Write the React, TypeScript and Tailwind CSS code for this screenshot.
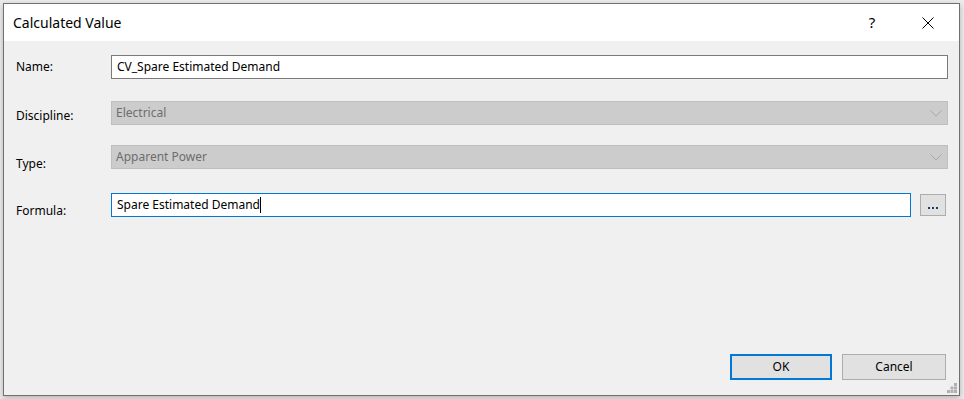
import React from 'react';

const font = { fontFamily: '"Noto Sans", "Open Sans", sans-serif' };

const Chevron: React.FC = () => (
  <svg width="12" height="7" viewBox="0 0 12 7" className="shrink-0">
    <path d="M0.5 0.5 L6 6 L11.5 0.5" fill="none" stroke="#a8a8a8" strokeWidth="1" />
  </svg>
);

const Label: React.FC<{ text: string; offset: string }> = ({ text, offset }) => (
  <div className={`w-[107px] shrink-0 pl-3 text-[12px] text-black ${offset}`}>{text}</div>
);

export default function App() {
  return (
    <div className="w-[964px] h-[399px] bg-[#ececec] pl-[3px] pt-[3px]" style={font}>
      <div className="w-[957px] h-[393px] border border-[#707070] bg-[#f0f0f0] flex flex-col shadow-[0_2px_6px_rgba(0,0,0,0.25)]">
        {/* title bar */}
        <div className="h-[37px] bg-white flex items-center shrink-0">
          <div className="pl-[9px] text-[14px] text-black flex-1 leading-none">Calculated Value</div>
          <div className="w-[46px] text-center text-[15px] text-black mr-[10px]">?</div>
          <div className="w-[46px] h-full flex items-center justify-center mr-[8px]">
            <svg width="12" height="12" viewBox="0 0 12 12">
              <path d="M0.5 0.5 L11.5 11.5 M11.5 0.5 L0.5 11.5" stroke="#000" strokeWidth="1" />
            </svg>
          </div>
        </div>

        <div className="flex-1 flex flex-col">
          {/* Name */}
          <div className="flex mt-[14px] h-[24px] items-center pr-[11px]">
            <Label text="Name:" offset="" />
            <div className="flex-1 h-[24px] bg-white border border-[#7a7a7a] flex items-center px-[5px] text-[12px] text-black">
              CV_Spare Estimated Demand
            </div>
          </div>

          {/* Discipline */}
          <div className="flex mt-[22px] h-[24px] pr-[11px]">
            <Label text="Discipline:" offset="pt-[6px]" />
            <div className="flex-1 h-[24px] bg-[#cccccc] border border-[#bfbfbf] flex items-center pl-[4px] pr-[5px] text-[12px] text-[#6d6d6d]">
              <span className="flex-1">Electrical</span>
              <Chevron />
            </div>
          </div>

          {/* Type */}
          <div className="flex mt-[20px] h-[24px] pr-[11px]">
            <Label text="Type:" offset="pt-[10px]" />
            <div className="flex-1 h-[24px] bg-[#cccccc] border border-[#bfbfbf] flex items-center pl-[4px] pr-[5px] text-[12px] text-[#6d6d6d]">
              <span className="flex-1">Apparent Power</span>
              <Chevron />
            </div>
          </div>

          {/* Formula */}
          <div className="flex mt-[24px] h-[24px] pr-[13px]">
            <Label text="Formula:" offset="pt-[9px]" />
            <div className="flex-1 h-[24px] bg-white border border-[#0078d7] flex items-center px-[5px] text-[12px] text-black">
              Spare Estimated Demand
              <span className="inline-block w-px h-[16px] bg-black" />
            </div>
            <div className="ml-[9px] w-[26px] h-[22px] mt-px bg-[#e1e1e1] border border-[#adadad] flex items-end justify-center pb-[6px] gap-[2px]">
              <span className="w-[2px] h-[2px] bg-[#1a3d6b]" />
              <span className="w-[2px] h-[2px] bg-[#1a3d6b]" />
              <span className="w-[2px] h-[2px] bg-[#1a3d6b]" />
            </div>
          </div>

          <div className="flex-1" />

          {/* buttons */}
          <div className="flex justify-end gap-[10px] pb-[15px] pr-[13px]">
            <button className="w-[102px] h-[26px] bg-[#e1e1e1] border-2 border-[#0078d7] text-[12px] text-black">OK</button>
            <button className="w-[104px] h-[26px] bg-[#e1e1e1] border border-[#adadad] text-[12px] text-black">Cancel</button>
          </div>
        </div>

        {/* size grip */}
        <div className="relative h-0">
          <svg width="10" height="10" viewBox="0 0 10 10" className="absolute right-[2px] bottom-[2px]">
            <rect x="7" y="0" width="3" height="3" fill="#b0b0b0" />
            <rect x="3.5" y="3.5" width="3" height="3" fill="#b0b0b0" />
            <rect x="7" y="3.5" width="3" height="3" fill="#b0b0b0" />
            <rect x="0" y="7" width="3" height="3" fill="#b0b0b0" />
            <rect x="3.5" y="7" width="3" height="3" fill="#b0b0b0" />
            <rect x="7" y="7" width="3" height="3" fill="#b0b0b0" />
          </svg>
        </div>
      </div>
    </div>
  );
}
